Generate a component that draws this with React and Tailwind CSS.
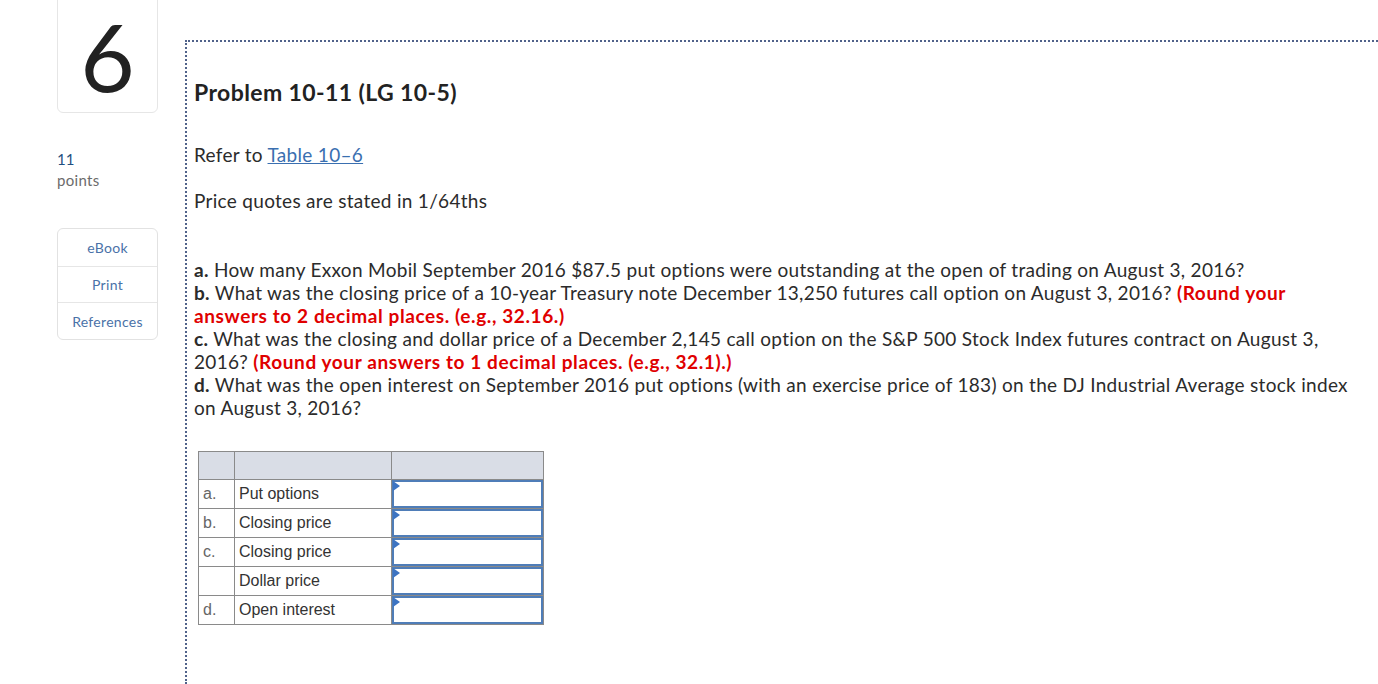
import React from "react";

const font = { fontFamily: "Lato, 'Open Sans', sans-serif" };

function InputCell() {
  return (
    <td className="border border-[#8a8a8a] p-0 h-[28px]">
      <div className="relative h-[28px] border-2 border-[#4f7db8] bg-white">
        <div className="absolute left-[-1px] top-[-1px] w-0 h-0 border-t-[5px] border-b-[5px] border-l-[7px] border-t-transparent border-b-transparent border-l-[#3d74c2]" />
      </div>
    </td>
  );
}

const rows = [
  ["a.", "Put options"],
  ["b.", "Closing price"],
  ["c.", "Closing price"],
  ["", "Dollar price"],
  ["d.", "Open interest"],
];

export default function App() {
  return (
    <div className="w-[1378px] h-[684px] overflow-hidden bg-white flex text-[#2b2b2b]" style={font}>
      <div className="ml-[57px] w-[101px] flex flex-col shrink-0">
        <div className="-mt-[10px] h-[123px] rounded-md border border-[#e6e6e6] flex items-center justify-center pt-[8px]">
          <span className="text-[94px] leading-none text-[#222]">6</span>
        </div>
        <div className="mt-[35px] text-[15px] leading-[22px] text-[#1f4f80]">11</div>
        <div className="text-[15px] leading-[20px] text-[#6b6b6b] tracking-[0.3px]">points</div>
        <div className="mt-[38px] rounded-md border border-[#e2e2e2] flex flex-col text-[14px] tracking-[0.3px] text-[#4a72a8]">
          <div className="h-[38px] flex items-center justify-center border-b border-[#e6e6e6]">eBook</div>
          <div className="h-[36px] flex items-center justify-center border-b border-[#e6e6e6]">Print</div>
          <div className="h-[36px] flex items-center justify-center">References</div>
        </div>
      </div>
      <div className="ml-[27px] mt-[40px] flex-1 border-l-2 border-t-2 border-dotted border-[#50628a] pl-[7px] pr-[18px]">
        <h1 className="mt-[36px] text-[23px] font-bold leading-[28px] tracking-[0.4px] text-[#222]">Problem 10-11 (LG 10-5)</h1>
        <div className="text-[19px] tracking-[0.3px]">
          <p className="mt-[37px] leading-[24px]">
            Refer to <span className="text-[#3a6fb0] underline">Table 10–6</span>
          </p>
          <p className="mt-[22px] leading-[24px]">Price quotes are stated in 1/64ths</p>
          <div className="mt-[45px] leading-[23px]">
            <div>
              <b>a.</b> How many Exxon Mobil September 2016 $87.5 put options were outstanding at the open of trading on August 3, 2016?
            </div>
            <div>
              <b>b.</b> What was the closing price of a 10-year Treasury note December 13,250 futures call option on August 3, 2016?{" "}
              <b className="text-[#e00000] tracking-[0.6px]">(Round your answers to 2 decimal places. (e.g., 32.16.)</b>
            </div>
            <div>
              <b>c.</b> What was the closing and dollar price of a December 2,145 call option on the S&amp;P 500 Stock Index futures contract on August 3, 2016?{" "}
              <b className="text-[#e00000] tracking-[0.6px]">(Round your answers to 1 decimal places. (e.g., 32.1).)</b>
            </div>
            <div>
              <b>d.</b> What was the open interest on September 2016 put options (with an exercise price of 183) on the DJ Industrial Average stock index on August 3, 2016?
            </div>
          </div>
        </div>
        <table
          className="mt-[32px] ml-[4px] border-collapse text-[16px] text-[#333]"
          style={{ fontFamily: "'Liberation Sans', Arial, sans-serif" }}
        >
          <tbody>
            <tr className="bg-[#d9dde6]">
              <td className="border border-[#8a8a8a] w-[36px] h-[28px]" />
              <td className="border border-[#8a8a8a] w-[157px]" />
              <td className="border border-[#8a8a8a] w-[152px]" />
            </tr>
            {rows.map(([l, t], i) => (
              <tr key={i}>
                <td className="border border-[#8a8a8a] h-[28px] pl-[4px] text-[#666]">{l}</td>
                <td className="border border-[#8a8a8a] pl-[4px]">{t}</td>
                <InputCell />
              </tr>
            ))}
          </tbody>
        </table>
      </div>
    </div>
  );
}
